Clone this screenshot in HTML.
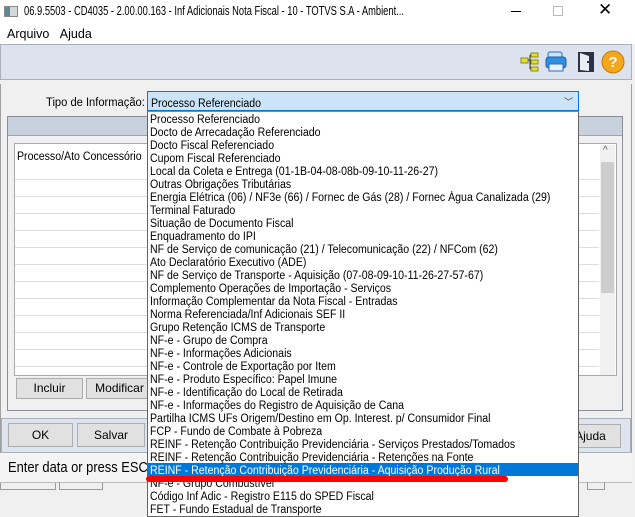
<!DOCTYPE html>
<html><head><meta charset="utf-8"><style>
*{box-sizing:border-box;margin:0;padding:0}
body{width:635px;height:517px;overflow:hidden;background:#f0f0f0;font-family:"Liberation Sans",sans-serif;position:relative}
.a{position:absolute}
.t{font-size:11.5px;color:#000;white-space:nowrap;display:inline-block;transform:scaleX(0.92);transform-origin:left center}
.btn{position:absolute;background:#e1e1e1;border:1px solid #adadad;font-size:12px;text-align:center}
.dd div{height:13px;line-height:13px;padding-left:2px;overflow:visible}
.row{position:absolute;left:15px;width:584px;height:1px;background:#ddd}
</style></head><body>
<div class="a" style="left:0;top:0;width:635px;height:22px;background:#fff"></div>
<div class="a" style="left:4px;top:6px;width:14px;height:11px;border:1px solid #888;background:#d8d8d8"><div style="width:5px;height:9px;background:#5a8a9a"></div></div>
<div class="a" style="left:24px;top:3px;font-size:13px;color:#000;white-space:nowrap"><span style="display:inline-block;transform:scaleX(0.72);transform-origin:left">06.9.5503 - CD4035 - 2.00.00.163 - Inf Adicionais Nota Fiscal - 10 - TOTVS S.A - Ambient...</span></div>
<div class="a" style="left:511px;top:11px;width:10px;height:1px;background:#000"></div>
<div class="a" style="left:553px;top:6px;width:10px;height:10px;border:1px solid #bbb"></div>
<div class="a" style="left:598px;top:0px;font-size:17px;color:#000">✕</div>
<div class="a" style="left:0;top:22px;width:635px;height:22px;background:#fff"></div>
<div class="a" style="left:7px;top:27px;font-size:12.5px">Arquivo&nbsp;&nbsp;&nbsp;Ajuda</div>
<div class="a" style="left:0;top:44px;width:632px;height:36px;background:#dde3ee;border:1px solid #a9b0bc"></div>
<svg class="a" style="left:518px;top:50px" width="110" height="24">
<g fill="#e6e02a" stroke="#8a8a20" stroke-width="1"><rect x="3" y="8" width="7" height="5"/><rect x="13" y="3" width="7" height="4"/><rect x="13" y="10" width="7" height="4"/><rect x="13" y="17" width="7" height="4"/></g>
<path d="M10 10h2M12 5v14M12 5h1M12 12h1M12 19h1" stroke="#333" fill="none"/>
<rect x="30" y="2" width="14" height="6" rx="2" fill="#cfe4f7" stroke="#2a6fb5"/>
<rect x="28" y="7" width="20" height="11" rx="3" fill="#2f8fe0" stroke="#1a5fa5"/>
<rect x="31" y="14" width="14" height="7" fill="#e8f2fb" stroke="#2a6fb5"/>
<rect x="60" y="2" width="16" height="20" fill="#2b3440"/><path d="M62 3l9 3v15l-9 -1z" fill="#e8eef5"/><rect x="69" y="11" width="2" height="2" fill="#333"/>
<circle cx="95" cy="12" r="11" fill="#f3a71c" stroke="#c67a00"/><text x="95" y="17" font-size="15" font-weight="bold" fill="#fff" text-anchor="middle" font-family="Liberation Sans">?</text>
</svg>
<div class="a" style="left:0;top:84px;width:632px;height:400px;border-right:1px solid #a0a0a0;border-left:1px solid #a0a0a0"></div>
<div class="a" style="left:0;top:93px;width:145px;text-align:right"><span class="t" style="transform-origin:right center;transform:scaleX(0.97)">Tipo de Informação:</span></div>
<div class="a" style="left:147px;top:91px;width:432px;height:20px;background:#cce4f7;border:1px solid #0078d7;padding:2px 3px"><span class="t">Processo Referenciado</span></div>
<div class="a" style="left:564px;top:95px;font-size:9px;color:#444">﹀</div>
<div class="a" style="left:7px;top:116px;width:616px;height:295px;border:1px solid #8a8f98;background:#f0f0f0"></div>
<div class="a" style="left:8px;top:117px;width:614px;height:19px;background:#c8d2df;border-bottom:1px solid #9aa3ae"></div>
<div class="a" style="left:14px;top:143px;width:603px;height:233px;background:#fff;border:1px solid #aaa"></div>
<div class="a" style="left:17px;top:147px"><span class="t">Processo/Ato Concessório</span></div>
<div class="row" style="top:179px"></div><div class="row" style="top:196px"></div><div class="row" style="top:213px"></div><div class="row" style="top:230px"></div><div class="row" style="top:247px"></div><div class="row" style="top:264px"></div><div class="row" style="top:281px"></div><div class="row" style="top:298px"></div><div class="row" style="top:315px"></div><div class="row" style="top:332px"></div><div class="row" style="top:349px"></div><div class="row" style="top:366px"></div>
<div class="a" style="left:600px;top:145px;width:15px;height:230px;background:#f0f0f0"></div>
<div class="a" style="left:601px;top:162px;width:13px;height:131px;background:#cdcdcd"></div>
<div class="a" style="left:603px;top:145px;font-size:10px;color:#555">^</div>
<div class="btn" style="left:16px;top:378px;width:67px;height:21px;line-height:19px">Incluir</div>
<div class="btn" style="left:86px;top:378px;width:67px;height:21px;line-height:19px">Modificar</div>
<div class="a" style="left:1px;top:418px;width:630px;height:35px;background:#dde4f0;border:1px solid #a9b0bc"></div>
<div class="btn" style="left:8px;top:423px;width:65px;height:24px;line-height:22px">OK</div>
<div class="btn" style="left:77px;top:423px;width:68px;height:24px;line-height:22px">Salvar</div>
<div class="btn" style="left:560px;top:424px;width:61px;height:24px;line-height:22px">Ajuda</div>
<div class="a" style="left:0;top:453px;width:632px;height:30px;background:#f4f4f4;border-bottom:1px solid #bbb"></div>
<div class="a" style="left:8px;top:459px;font-size:15px;color:#000;white-space:nowrap"><span style="display:inline-block;transform:scaleX(0.86);transform-origin:left">Enter data or press ESC</span></div>
<div class="a" style="left:0;top:483px;width:635px;height:34px;background:#f0f0f0"></div>
<div class="a" style="left:0;top:483px;width:56px;height:7px;border:1px solid #999;border-top:none"></div>
<div class="a" style="left:59px;top:483px;width:44px;height:7px;border:1px solid #999;border-top:none"></div>
<div class="a" style="left:587px;top:483px;width:18px;height:7px;border:1px solid #999;border-top:none"></div>
<div class="a dd" style="left:147px;top:111px;width:432px;height:406px;background:#fff;border:1px solid #646464;border-top:1px solid #888">
<div><span class="t">Processo Referenciado</span></div>
<div><span class="t">Docto de Arrecadação Referenciado</span></div>
<div><span class="t">Docto Fiscal Referenciado</span></div>
<div><span class="t">Cupom Fiscal Referenciado</span></div>
<div><span class="t">Local da Coleta e Entrega (01-1B-04-08-08b-09-10-11-26-27)</span></div>
<div><span class="t">Outras Obrigações Tributárias</span></div>
<div><span class="t">Energia Elétrica (06) / NF3e (66) / Fornec de Gás (28) / Fornec Água Canalizada (29)</span></div>
<div><span class="t">Terminal Faturado</span></div>
<div><span class="t">Situação de Documento Fiscal</span></div>
<div><span class="t">Enquadramento do IPI</span></div>
<div><span class="t">NF de Serviço de comunicação (21) / Telecomunicação (22) / NFCom (62)</span></div>
<div><span class="t">Ato Declaratório Executivo (ADE)</span></div>
<div><span class="t">NF de Serviço de Transporte - Aquisição (07-08-09-10-11-26-27-57-67)</span></div>
<div><span class="t">Complemento Operações de Importação - Serviços</span></div>
<div><span class="t">Informação Complementar da Nota Fiscal - Entradas</span></div>
<div><span class="t">Norma Referenciada/Inf Adicionais SEF II</span></div>
<div><span class="t">Grupo Retenção ICMS de Transporte</span></div>
<div><span class="t">NF-e - Grupo de Compra</span></div>
<div><span class="t">NF-e - Informações Adicionais</span></div>
<div><span class="t">NF-e - Controle de Exportação por Item</span></div>
<div><span class="t">NF-e - Produto Específico: Papel Imune</span></div>
<div><span class="t">NF-e - Identificação do Local de Retirada</span></div>
<div><span class="t">NF-e - Informações do Registro de Aquisição de Cana</span></div>
<div><span class="t">Partilha ICMS UFs Origem/Destino em Op. Interest. p/ Consumidor Final</span></div>
<div><span class="t">FCP - Fundo de Combate à Pobreza</span></div>
<div><span class="t">REINF - Retenção Contribuição Previdenciária - Serviços Prestados/Tomados</span></div>
<div><span class="t">REINF - Retenção Contribuição Previdenciária - Retenções na Fonte</span></div>
<div style="background:#0078d7"><span class="t" style="color:#fff">REINF - Retenção Contribuição Previdenciária - Aquisição Produção Rural</span></div>
<div><span class="t">NF-e - Grupo Combustível</span></div>
<div><span class="t">Código Inf Adic - Registro E115 do SPED Fiscal</span></div>
<div><span class="t">FET - Fundo Estadual de Transporte</span></div>
</div>
<div class="a" style="left:146px;top:476px;width:362px;height:6px;background:#f00;border-radius:3px"></div>
</body></html>
